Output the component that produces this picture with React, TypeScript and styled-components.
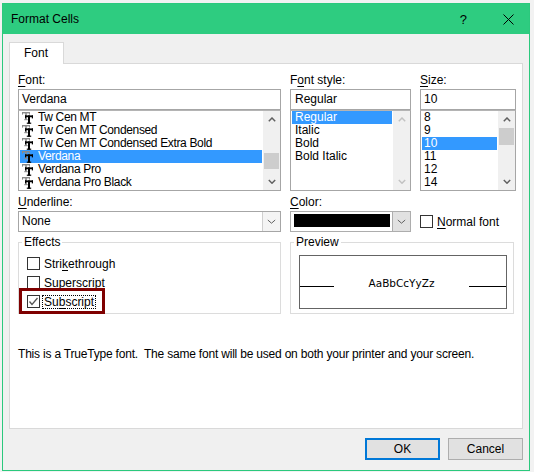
import React from 'react';
import styled, { createGlobalStyle, css } from 'styled-components';

const FONT = `'Segoe UI', 'Liberation Sans', Arial, sans-serif`;

const GlobalStyle = createGlobalStyle`
  html, body {
    margin: 0;
    padding: 0;
  }
  body {
    background: #f2f2f2;
    font-family: ${FONT};
    font-size: 12px;
    color: #000;
  }
`;

const fontNames = [
  'Tw Cen MT',
  'Tw Cen MT Condensed',
  'Tw Cen MT Condensed Extra Bold',
  'Verdana',
  'Verdana Pro',
  'Verdana Pro Black',
];
const fontStyles = ['Regular', 'Italic', 'Bold', 'Bold Italic'];
const fontSizes = ['8', '9', '10', '11', '12', '14'];

function TrueTypeIcon() {
  return (
    <svg width="11" height="12" viewBox="0 0 11 12">
      <g fill="#8a8a8a">
        <rect x="0" y="0" width="8" height="1.4" />
        <rect x="0" y="0" width="1" height="2.6" />
        <rect x="7" y="0" width="1" height="2.6" />
        <rect x="3.2" y="0" width="1.6" height="8" />
        <rect x="2.2" y="7.2" width="3.6" height="1" />
      </g>
      <g fill="#000">
        <rect x="3" y="3.4" width="8" height="1.8" />
        <rect x="3" y="3.4" width="1.2" height="3" />
        <rect x="9.8" y="3.4" width="1.2" height="3" />
        <rect x="6" y="3.4" width="2" height="8.2" />
        <rect x="4.8" y="10.6" width="4.4" height="1.2" />
      </g>
    </svg>
  );
}

function Chevron({ up, disabled, wide }: { up?: boolean; disabled?: boolean; wide?: boolean }) {
  const w = wide ? 9 : 8;
  const h = 5;
  const pts = up ? `0.8,${h - 0.8} ${w / 2},1 ${w - 0.8},${h - 0.8}` : `0.8,1 ${w / 2},${h - 0.8} ${w - 0.8},1`;
  return (
    <svg width={w} height={h} viewBox={`0 0 ${w} ${h}`}>
      <polyline
        points={pts}
        fill="none"
        stroke={disabled ? '#c2c2c2' : '#606060'}
        strokeWidth={wide ? 1 : 1.5}
      />
    </svg>
  );
}

function CloseIcon() {
  return (
    <svg width="11" height="11" viewBox="0 0 11 11">
      <path d="M0.5 0.5 L10.5 10.5 M10.5 0.5 L0.5 10.5" stroke="#000" strokeWidth="1" />
    </svg>
  );
}

function CheckMark() {
  return (
    <svg width="11" height="11" viewBox="0 0 11 11">
      <polyline points="1.5,5.5 4,8.5 9.5,2" fill="none" stroke="#555" strokeWidth="1.3" />
    </svg>
  );
}

function Scrollbar({ thumbTop, thumbHeight, disabled }: { thumbTop?: number; thumbHeight?: number; disabled?: boolean }) {
  return (
    <ScrollTrack>
      <ScrollArrow>
        <Chevron up disabled={disabled} />
      </ScrollArrow>
      <ScrollBody>{thumbHeight ? <Thumb $top={thumbTop ?? 0} $height={thumbHeight} /> : null}</ScrollBody>
      <ScrollArrow>
        <Chevron disabled={disabled} />
      </ScrollArrow>
    </ScrollTrack>
  );
}

function Check({ checked, children, focused }: { checked?: boolean; children: React.ReactNode; focused?: boolean }) {
  return (
    <>
      <CheckBox>{checked ? <CheckMark /> : null}</CheckBox>
      <CheckText $focused={focused}>{children}</CheckText>
    </>
  );
}

export default function App() {
  return (
    <>
      <GlobalStyle />
      <Page>
        <Dialog>
          <TitleBar>
            <Title>Format Cells</Title>
            <Help>?</Help>
            <CloseIcon />
          </TitleBar>

          <Body>
            <TabStrip>
              <Tab>Font</Tab>
            </TabStrip>

            <Panel>
              <FieldGrid>
                <div>
                  <Label>
                    <Key>F</Key>ont:
                  </Label>
                  <TextBox>Verdana</TextBox>
                  <ListBox>
                    <ListItems>
                      {fontNames.map((name) => (
                        <ListRow key={name} $pad={2} $tight $selected={name === 'Verdana'}>
                          <TrueTypeIcon />
                          <span>{name}</span>
                        </ListRow>
                      ))}
                    </ListItems>
                    <Scrollbar thumbTop={25} thumbHeight={16} />
                  </ListBox>
                </div>

                <div>
                  <Label>
                    F<Key>o</Key>nt style:
                  </Label>
                  <TextBox $pad={4}>Regular</TextBox>
                  <ListBox>
                    <ListItems>
                      {fontStyles.map((s) => (
                        <ListRow key={s} $pad={3} $selected={s === 'Regular'}>
                          {s}
                        </ListRow>
                      ))}
                    </ListItems>
                    <Scrollbar disabled />
                  </ListBox>
                </div>

                <div>
                  <Label>
                    <Key>S</Key>ize:
                  </Label>
                  <TextBox $pad={3}>10</TextBox>
                  <ListBox>
                    <ListItems>
                      {fontSizes.map((s) => (
                        <ListRow key={s} $pad={2} $selected={s === '10'}>
                          {s}
                        </ListRow>
                      ))}
                    </ListItems>
                    <Scrollbar thumbTop={0} thumbHeight={17} />
                  </ListBox>
                </div>
              </FieldGrid>

              <FieldGrid $top={4}>
                <div>
                  <Label>
                    <Key>U</Key>nderline:
                  </Label>
                  <Dropdown>
                    <DropValue>None</DropValue>
                    <DropArrow>
                      <Chevron wide />
                    </DropArrow>
                  </Dropdown>
                </div>

                <div>
                  <Label>
                    <Key>C</Key>olor:
                  </Label>
                  <Dropdown $dark>
                    <Swatch />
                    <DropArrow $shaded>
                      <Chevron wide />
                    </DropArrow>
                  </Dropdown>
                </div>

                <div>
                  <Label />
                  <CheckRow $h={21}>
                    <Check>
                      <Key>N</Key>ormal font
                    </Check>
                  </CheckRow>
                </div>
              </FieldGrid>

              <GroupGrid>
                <Group>
                  <Legend>Effects</Legend>
                  <CheckRow>
                    <Check>
                      Stri<Key>k</Key>ethrough
                    </Check>
                  </CheckRow>
                  <CheckRow>
                    <Check>
                      Sup<Key>e</Key>rscript
                    </Check>
                  </CheckRow>
                  <CheckRow>
                    <Check checked focused>
                      Su<Key>b</Key>script
                    </Check>
                    <Highlight />
                  </CheckRow>
                </Group>

                <Group $preview>
                  <Legend>Preview</Legend>
                  <PreviewBox>
                    <PreviewRow>
                      <PreviewLine $w={34} />
                      <PreviewText>AaBbCcYyZz</PreviewText>
                      <PreviewLine $w={37} />
                    </PreviewRow>
                  </PreviewBox>
                </Group>
              </GroupGrid>

              <Footer>
                This is a TrueType font.&nbsp; The same font will be used on both your printer and your screen.
              </Footer>
            </Panel>

            <ButtonRow>
              <Button $default>OK</Button>
              <Button>Cancel</Button>
            </ButtonRow>
          </Body>
        </Dialog>
      </Page>
    </>
  );
}

const Page = styled.div`
  padding: 3px 0 0 2px;
`;

const Dialog = styled.div`
  width: 528px;
  height: 468px;
  box-sizing: border-box;
  border: 1px solid #2bc97d;
  background: #f0f0f0;
  display: flex;
  flex-direction: column;
`;

const TitleBar = styled.div`
  flex: none;
  height: 30px;
  background: #2ecc80;
  display: flex;
  align-items: center;
  padding: 0 15px 0 8px;
`;

const Title = styled.div`
  flex: 1;
  font-size: 12px;
`;

const Help = styled.span`
  font-size: 13px;
  margin-right: 36px;
`;

const Body = styled.div`
  flex: 1;
  display: flex;
  flex-direction: column;
  padding: 8px 6px 10px;
`;

const TabStrip = styled.div`
  display: flex;
  height: 21px;
`;

const Tab = styled.div`
  position: relative;
  z-index: 1;
  width: 55px;
  height: 22px;
  box-sizing: border-box;
  border: 1px solid #d9d9d9;
  border-bottom: none;
  background: #fff;
  padding-left: 14px;
  line-height: 21px;
`;

const Panel = styled.div`
  height: 366px;
  box-sizing: border-box;
  border: 1px solid #d9d9d9;
  background: #fff;
  padding: 9px 6px 0 8px;
`;

const FieldGrid = styled.div<{ $top?: number }>`
  display: grid;
  grid-template-columns: 263px 121px 96px;
  column-gap: 9px;
  margin-top: ${(p) => p.$top ?? 0}px;
`;

const GroupGrid = styled.div`
  display: grid;
  grid-template-columns: 263px 224px;
  column-gap: 9px;
  margin-top: 3px;
`;

const Key = styled.span`
  text-decoration: underline;
  text-underline-offset: 2px;
`;

const Label = styled.div`
  height: 15px;
  line-height: 15px;
  margin-bottom: 1px;
  white-space: nowrap;
`;

const TextBox = styled.div<{ $pad?: number }>`
  height: 21px;
  box-sizing: border-box;
  border: 1px solid #a6a6a6;
  padding-left: ${(p) => p.$pad ?? 3}px;
  line-height: 19px;
  background: #fff;
`;

const ListBox = styled.div`
  height: 81px;
  box-sizing: border-box;
  border: 1px solid #a6a6a6;
  border-top-color: #b4b4b4;
  display: flex;
  overflow: hidden;
  background: #fff;
`;

const ListItems = styled.div`
  flex: 1;
  min-width: 0;
  padding: 0 1px;
`;

const ListRow = styled.div<{ $selected?: boolean; $pad: number; $tight?: boolean }>`
  height: 13px;
  line-height: 13px;
  display: flex;
  align-items: center;
  gap: 5px;
  padding-left: ${(p) => p.$pad}px;
  white-space: nowrap;
  letter-spacing: ${(p) => (p.$tight ? '-0.35px' : 'normal')};
  background: ${(p) => (p.$selected ? '#3399ff' : 'transparent')};
  color: ${(p) => (p.$selected ? '#fff' : '#000')};
`;

const ScrollTrack = styled.div`
  flex: none;
  width: 17px;
  background: #f0f0f0;
  display: flex;
  flex-direction: column;
`;

const ScrollArrow = styled.div`
  flex: none;
  height: 17px;
  display: flex;
  align-items: center;
  justify-content: center;
`;

const ScrollBody = styled.div`
  flex: 1;
`;

const Thumb = styled.div<{ $top: number; $height: number }>`
  margin: ${(p) => p.$top}px 1px 0;
  height: ${(p) => p.$height}px;
  background: #cdcdcd;
`;

const Dropdown = styled.div<{ $dark?: boolean }>`
  height: 21px;
  box-sizing: border-box;
  border: 1px solid ${(p) => (p.$dark ? '#adadad' : '#a6a6a6')};
  background: #fff;
  display: flex;
`;

const DropValue = styled.div`
  flex: 1;
  padding-left: 3px;
  line-height: 19px;
`;

const DropArrow = styled.div<{ $shaded?: boolean }>`
  flex: none;
  width: 17px;
  display: flex;
  align-items: center;
  justify-content: center;
  border-left: 1px solid ${(p) => (p.$shaded ? '#adadad' : '#cfcfcf')};
  background: ${(p) => (p.$shaded ? '#e1e1e1' : '#f4f4f4')};
`;

const Swatch = styled.div`
  flex: 1;
  margin: 2px 2px 4px 3px;
  background: #000;
`;

const CheckRow = styled.div<{ $h?: number }>`
  position: relative;
  display: flex;
  align-items: center;
  gap: 4px;
  height: ${(p) => p.$h ?? 19}px;
  white-space: nowrap;
`;

const CheckBox = styled.span`
  flex: none;
  width: 13px;
  height: 13px;
  box-sizing: border-box;
  border: 1px solid #333;
  background: #fff;
  display: flex;
  align-items: center;
  justify-content: center;
`;

const CheckText = styled.span<{ $focused?: boolean }>`
  line-height: 12px;
  ${(p) =>
    p.$focused &&
    css`
      outline: 1px dotted #000;
      padding: 0 1px;
      margin-left: -1px;
    `}
`;

const Highlight = styled.div`
  position: absolute;
  left: -8px;
  top: -4px;
  width: 86px;
  height: 26px;
  box-sizing: border-box;
  border: 3px solid #7f0000;
  pointer-events: none;
`;

const Group = styled.fieldset<{ $preview?: boolean }>`
  margin: 0;
  min-width: 0;
  border: 1px solid #dcdcdc;
  padding: ${(p) => (p.$preview ? '5px 6px 3px 8px' : '4px 0 2px 8px')};
`;

const Legend = styled.legend`
  margin-left: -5px;
  padding: 0 2px;
  line-height: 15px;
  font-size: 12px;
`;

const PreviewBox = styled.div`
  height: 54px;
  box-sizing: border-box;
  border: 1px solid #646464;
  background: #fff;
`;

const PreviewRow = styled.div`
  display: flex;
  align-items: flex-start;
  margin-top: 30px;
`;

const PreviewLine = styled.span<{ $w: number }>`
  flex: none;
  width: ${(p) => p.$w}px;
  height: 1px;
  background: #000;
`;

const PreviewText = styled.span`
  flex: 1;
  text-align: center;
  margin-top: -9px;
  font-family: 'DejaVu Sans', Verdana, sans-serif;
  font-size: 10.5px;
  line-height: 12px;
`;

const Footer = styled.div`
  margin-top: 33px;
  line-height: 15px;
  white-space: nowrap;
  letter-spacing: -0.2px;
`;

const ButtonRow = styled.div`
  display: flex;
  justify-content: flex-end;
  gap: 8px;
  margin-top: 9px;
`;

const Button = styled.button<{ $default?: boolean }>`
  width: 75px;
  height: 22px;
  box-sizing: border-box;
  padding: 0;
  font: 12px ${FONT};
  color: #000;
  background: #e1e1e1;
  border: ${(p) => (p.$default ? '2px solid #0078d7' : '1px solid #adadad')};
`;
